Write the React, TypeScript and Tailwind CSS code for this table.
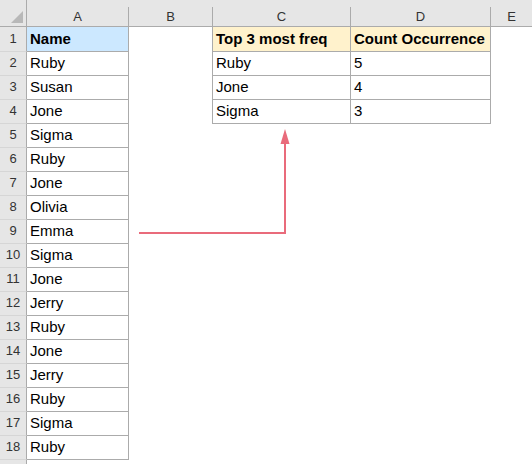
import React from 'react';

const names = [
  'Ruby', 'Susan', 'Jone', 'Sigma', 'Ruby', 'Jone', 'Olivia', 'Emma', 'Sigma',
  'Jone', 'Jerry', 'Ruby', 'Jone', 'Jerry', 'Ruby', 'Sigma', 'Ruby',
];

const top3 = [
  { name: 'Ruby', count: '5' },
  { name: 'Jone', count: '4' },
  { name: 'Sigma', count: '3' },
];

const cols = ['A', 'B', 'C', 'D', 'E'];
const colW = ['w-[102px]', 'w-[84px]', 'w-[138px]', 'w-[140px]', 'flex-1'];

const App: React.FC = () => {
  const rows = ['Name', ...names];

  return (
    <div className="relative w-[532px] h-[464px] overflow-hidden bg-white font-['Liberation_Sans',Arial,sans-serif] text-black">
      {/* Column headers */}
      <div className="flex h-[27px] bg-[#e6e6e6] border-b border-[#ababab]">
        <div className="relative w-[27px] border-r border-[#ababab]">
          <div className="absolute left-[11px] top-[11px] w-0 h-0 border-l-[12px] border-l-transparent border-b-[12px] border-b-[#b8b8b8]" />
        </div>
        {cols.map((c, i) => (
          <div key={c} className={`${colW[i]} flex items-end`}>
            <div className={`flex-1 h-[19px] flex items-center justify-center pt-[1px] text-[13px] text-[#333] ${i < 4 ? 'border-r border-[#ababab]' : ''}`}>
              {c}
            </div>
          </div>
        ))}
      </div>

      {/* Rows */}
      {[...rows, ''].map((name, r) => {
        const inTable = r < 4;
        const isHead = r === 0;
        const isLast = r === rows.length;
        return (
          <div key={r} className={`flex ${r === 0 ? 'h-[25px]' : 'h-[24px]'}`}>
            <div className="w-[27px] bg-[#e6e6e6] border-r border-b border-r-[#ababab] border-b-[#d6d6d6] flex items-end justify-center pb-[3px] text-[13px] text-[#333]">
              {isLast ? '' : r + 1}
            </div>
            <div
              className={`w-[102px] pl-[3px] pb-[1px] flex items-end text-[15px] ${
                isLast ? '' : 'border-r border-b border-[#ababab]'
              } ${isHead ? 'bg-[#cce8ff] font-bold' : ''}`}
            >
              {name}
            </div>
            <div className={`w-[84px] ${inTable ? 'border-r border-[#ababab]' : ''}`} />
            <div
              className={`w-[138px] pl-[3px] pb-[1px] flex items-end text-[15px] ${
                inTable ? 'border-r border-b border-[#ababab]' : ''
              } ${isHead ? 'bg-[#fff2cc] font-bold' : ''}`}
            >
              {isHead ? 'Top 3 most freq' : inTable ? top3[r - 1].name : ''}
            </div>
            <div
              className={`w-[140px] pl-[3px] pb-[1px] flex items-end text-[15px] ${
                inTable ? 'border-r border-b border-[#ababab]' : ''
              } ${isHead ? 'bg-[#fff2cc] font-bold' : ''}`}
            >
              {isHead ? 'Count Occurrence' : inTable ? top3[r - 1].count : ''}
            </div>
            <div className="flex-1" />
          </div>
        );
      })}

      {/* Arrow */}
      <svg className="absolute left-0 top-0 pointer-events-none" width="532" height="464">
        <polyline points="139,233 285,233 285,140" fill="none" stroke="#e96b7b" strokeWidth="2" />
        <polygon points="285,129 280.5,144 289.5,144" fill="#e96b7b" />
      </svg>
    </div>
  );
};

export default App;
